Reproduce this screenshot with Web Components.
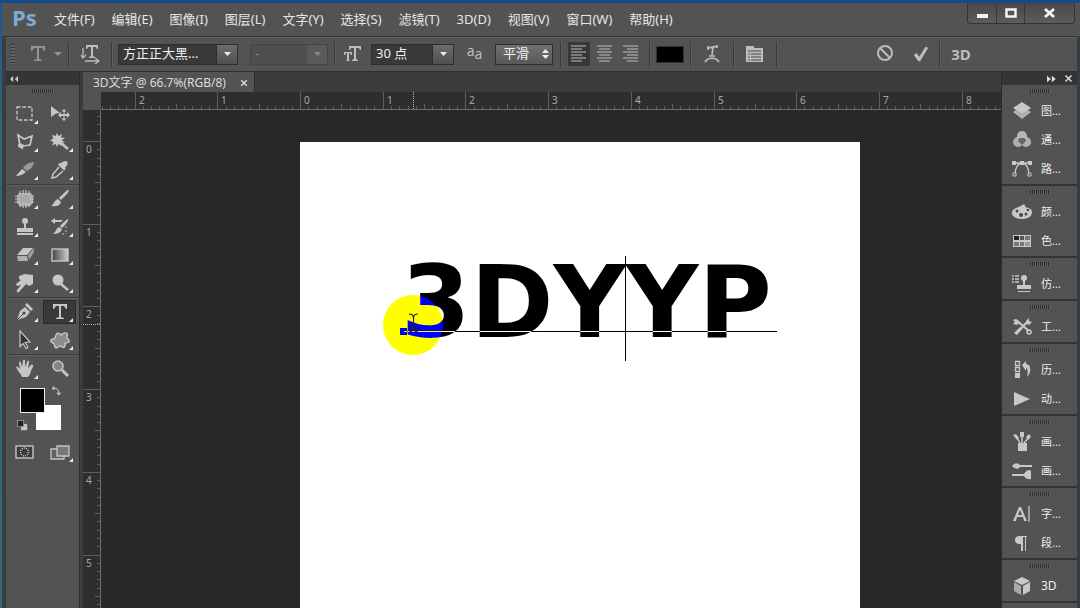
<!DOCTYPE html>
<html lang="zh-CN">
<head>
<meta charset="utf-8">
<title>3D文字</title>
<style>
html,body{margin:0;height:100%;background:#282828}
body{font:13px/20px "Noto Sans","Noto Sans CJK SC",sans-serif;color:#e2e2e2;overflow:hidden}
</style>
</head>
<body>
<ps-app></ps-app>
<script>
const ICONS={
marquee:'<rect x="2" y="3" width="15" height="13" fill="none" stroke="currentColor" stroke-width="1.3" stroke-dasharray="3.6 1.8"/>',
move:'<path d="M1 2l9 7-4 .5L1 13z"/><path d="M14 6l2.500 2.500h-2v2.500h2.500v-2l3 3-3 3v-2h-2.500v2.500h2L14 18l-2.500-2.500h2V13H11v2l-3-3 3-3v2h2.500V8.500h-2z" transform="translate(0 -1)"/>',
lasso:'<path d="M3 3l6 4 8-3-2 9-7 1-3-1zM8 14c-2-3-5-2-4 0s3 1 5-1M8 13l-1 4" fill="none" stroke="currentColor" stroke-width="1.700"/>',
wand:'<path d="M7 1l1.500 3L12 2l-1 3.500 4 .5-3 2 3 3-4-.5.5 3.500-3-2L7 15l-1.300-3L2 13.500 3.500 10 0 8.500l3.300-2L2 3l3.500 1z"/><path d="M11 11l7 6" stroke="currentColor" stroke-width="2.400"/>',
slice:'<path d="M1 16l6-7 4 3c-2 2-6 4-10 4z"/><path d="M8 8c4-5 6-5 11-6-1 5-3 7-7 9z" opacity=".6"/>',
dropper:'<path d="M11 3.500c2-3 5-3 6-2s1 4-2 6l1 1-2 2-6-6 2-2z"/><path d="M9 7l-6 7-1 4 4-1 7-6" fill="none" stroke="currentColor" stroke-width="1.500"/>',
heal:'<path d="M4 4h12l2 3v7l-3 3H5l-3-3V7z" opacity=".75"/><path d="M5 2v4M8 1v5M11 1v5M14 2v4M5 14v4M8 14v5M11 14v5M14 14v4M0 7h5M0 10h5M0 13h5M15 7h4M15 10h4M15 13h4" stroke="currentColor" stroke-width="1.200"/>',
brush:'<path d="M18 1c2 1 0 3-7 10L9 9c5-5 8-8 9-8z"/><path d="M8 10l3 3c-1 4-5 5-10 4 3-1 3-6 7-7z"/>',
stamp:'<circle cx="10" cy="4" r="3"/><path d="M9 6h2v5h7v4H2v-4h7zM2 16h16v2H2z"/>',
history:'<path d="M2 3h8V1l4 3-4 3V5H4z" transform="matrix(-1 0 0 1 15 0)"/><path d="M18 2c1 1-1 4-6 9l-2-2c4-4 7-7 8-7zM9 10l3 2c-1 4-5 5-9 5 3-2 3-6 6-7z"/><path d="M16 9v2m0 2v2m-2 2h-2" stroke="currentColor"/>',
eraser:'<path d="M8 3h10l-6 7H2z"/><path d="M2 11h10l1 5H3z" opacity=".8"/><path d="M13 10l6-7v4l-5 8z" opacity=".65"/>',
gradient:'<defs><linearGradient id="g"><stop stop-color="#444"/><stop offset="1" stop-color="#ccc"/></linearGradient></defs><rect x="2" y="4" width="16" height="12" fill="url(#g)" stroke="currentColor" stroke-width="1.400"/>',
smudge:'<path d="M4 3l6-2 8 1v9l-4 2-3-2-7 8c-1 1-3 0-2-2l4-5-4 1-1-2 5-4-2-1z"/>',
dodge:'<circle cx="8" cy="7" r="5.500"/><path d="M11 11l7 6" stroke="currentColor" stroke-width="2.500"/>',
pen:'<path d="M12 1l6 6-2 2-6-6z"/><path d="M10 5l5 5-4 5-9 3 3-9z"/><path d="M2 18l6-6" stroke="#4a4a4a"/><circle cx="9" cy="11" r="1.500" fill="#444"/>',
type:'<path d="M3 2h14v5h-1l-2-3h-3v11l3 1v1H6v-1l3-1V4H6L4 7H3z"/>',
arrow:'<path d="M5 1l10 11-5 .5 3 5-2 1-3-5-3 3z" fill="#333" stroke="currentColor" stroke-width="1.200"/>',
shape:'<path d="M6 5c1-3 4-2 5 0 3-3 8-3 6 1-1 2 1 3 2 4 1 3-3 3-4 3 1 4-2 6-4 3-2-1-4 4-6 1-1-2 0-3-2-4-3-1-3-3 0-4 3 0 2-2 3-4z" fill="#8b8b8b" stroke="currentColor" stroke-width="1.400"/>',
hand:'<path d="M1 8c1-1 2 0 4 2L4 4c0-2 2-2 2 0l1 4 1-6c0-2 2-2 2 0v6l2-5c1-2 3-1 2 0l-1 6 3-3c1-1 3 0 2 2-2 2-2 7-5 10H7c-1-3-3-4-6-10z"/>',
zoom:'<circle cx="8" cy="7" r="5" fill="#858585" stroke="currentColor" stroke-width="1.600"/><path d="M12 11l6 6" stroke="currentColor" stroke-width="3"/>',
mask:'<rect x="1" y="4" width="17" height="12" fill="#3c3c3c" stroke="currentColor" stroke-width="1.400"/><circle cx="9.500" cy="10" r="4" fill="none" stroke="currentColor" stroke-width="1.300" stroke-dasharray="1.200 1"/>',
screen:'<path d="M1 7h13v10H1z" fill="#606060" stroke="currentColor" stroke-width="1.300"/><path d="M7 4h12v10H7z" fill="#777" stroke="currentColor" stroke-width="1.300"/>',
swap:'<path d="M4 5c6 0 8 2 8 8" fill="none" stroke="currentColor" stroke-width="1.600"/><path d="M5 1v8L1 5zM8 12h8l-4 4z"/>',
defaults:'<rect x="7" y="7" width="9" height="9" fill="#c4c4c4"/><rect x="2" y="2" width="9" height="9" fill="#222" stroke="#aaa"/>',
tune:'<path d="M3 4v10M1 11l2 3 3-3M5 17h13M15 14l4 3-4 3" fill="none" stroke="currentColor" stroke-width="1.300"/><path d="M6 1h12v4h-1l-1-2h-3v9l2 1v1H9v-1l2-1V3H8L7 5H6z"/>',
size:'<path d="M6 2h12v4h-1l-1-2h-3v11l2 1v1H9v-1l2-1V4H8L7 6H6z"/><path d="M1 8h8v3H8l-1-2H6v7l1 1H3l1-1V9H3l-1 2H1z"/>',
left:'<path d="M2 2h15M2 5h11M2 8h15M2 11h11M2 14h15M2 17h11" stroke="currentColor" stroke-width="1.200"/>',
center:'<path d="M2 2h15M4 5h11M2 8h15M4 11h11M2 14h15M4 17h11" stroke="currentColor" stroke-width="1.200"/>',
right:'<path d="M2 2h15M6 5h11M2 8h15M6 11h11M2 14h15M6 17h11" stroke="currentColor" stroke-width="1.200"/>',
warp:'<path d="M6 4c3 0 5-1 9-2M6 2v4M15 1v3M11 3L10 11M7 12h6M3 18c3-5 11-5 14 0" fill="none" stroke="currentColor" stroke-width="1.700"/>',
panel:'<path d="M1 2h8v2h9v14H1z"/><path d="M3 7h13M6 10h10M6 13h10M6 16h10M3 10h2M3 13h2M3 16h2" stroke="#484848" stroke-width="1.200"/>',
cancel:'<circle cx="10" cy="9" r="7" fill="none" stroke="currentColor" stroke-width="2"/><path d="M5 4l10 10" stroke="currentColor" stroke-width="2"/>',
check:'<path d="M2 11l3-2 3 4 7-11 3 1L9 18H7z"/>',
layers:'<path d="M10 1l9 6-9 6-9-6z"/><path d="M1 11l3-2 6 4 6-4 3 2-9 7z" opacity=".8"/>',
channels:'<circle cx="10" cy="6" r="5" opacity=".85"/><circle cx="6" cy="12" r="5" opacity=".8"/><circle cx="14" cy="12" r="5" opacity=".8"/><path d="M7 8h6l1 3-4 4-4-4z" fill="#666"/>',
paths:'<path d="M3 16C3 9 6 4 10 4s7 5 7 12M3 4h14" fill="none" stroke="currentColor" stroke-width="1.300"/><path d="M0 2h4v4H0zM8 2h4v4H8zM16 2h4v4h-4z"/><path d="M1 14h3v3H1zM16 14h3v3h-3z" fill="#535353" stroke="currentColor"/>',
color:'<path d="M9 4c1-2 5-2 4 0s7 1 7 6-5 7-10 7S0 15 0 11s4-5 9-7z"/><g fill="#484848"><circle cx="5" cy="9" r="1.500"/><circle cx="9" cy="13" r="2"/><circle cx="14" cy="12" r="1.500"/><circle cx="16" cy="8" r="1.300"/></g>',
swatches:'<path d="M1 4h18v12H1z"/><path d="M2 5h5v4H2z" fill="#222"/><path d="M8 5h4v4H8z" fill="#555"/><path d="M13 5h5v4h-5z" fill="#777"/><path d="M2 11h5v4H2zM8 11h4v4H8z" fill="#777"/><path d="M13 11h5v4h-5z" fill="#999"/>',
clone:'<circle cx="12" cy="4" r="3"/><path d="M11 6h2v5h6v4H5v-4h6zM6 17h12v1H6z"/><path d="M0 2h2M3 2h4M0 5h2M3 5h4M0 8h2M3 8h4" stroke="currentColor" stroke-width="1.500"/>',
tools:'<path d="M4 3l13 11M16 4L4 17" stroke="currentColor" stroke-width="2.200"/><path d="M1 3l3-1 4 3-3 3-4-1 2-2z"/><circle cx="17" cy="15" r="2" fill="none" stroke="currentColor" stroke-width="1.600"/><path d="M2 16l6-6 2 2-5 6zM14 4l3-3v3l3 1-3 3-3-1z"/>',
hist:'<path d="M3.500 1.500h4v4h-4zM3.500 7.500h4v4h-4z" fill="none" stroke="currentColor" stroke-width="1.300"/><path d="M3 13h5v5H3zM10 5l4-4v3c5 0 6 8 1 13 1-5 1-8-1-9v3z"/>',
play:'<path d="M2 3l16 7-16 7z"/>',
presets:'<path d="M6 11h9v8H6z"/><path d="M8 11L4 4M10 11V2M12 11l5-6" stroke="currentColor" stroke-width="1.500"/><path d="M1 3l3-1 3 4-2 2zM8 0h4v5H8zM14 5l3-3 2 3-3 3z"/>',
brushes:'<path d="M0 5c3-4 6-3 8-1h12v2H8C6 9 3 8 0 5zM0 13h12c2-4 6-5 7-3v8c-3 1-6-1-7-3H0z"/>',
char:'<path d="M1 17L7 3h2l6 14h-3l-1-4H5l-1 4zM6 11h4L8 6z"/><path d="M17 2v16" stroke="currentColor" stroke-width="1.300"/>',
para:'<path d="M3 7c0-3 2-4 6-4h6v1h-1v14h-1V4h-2v14h-2v-7c-4 0-6-1-6-4z"/>',
cube:'<path d="M10 1l8 4-8 4-8-4z"/><path d="M2 6l7 4v9l-7-4z" opacity=".75"/><path d="M18 6l-7 4v9l7-4z"/>',
down:'<path d="M6 8h8l-4 4z"/>',
rewind:'<path d="M9 6v8L5 10zM15 6v8l-4-4z"/>',
forward:'<path d="M5 6v8l5-4zM11 6v8l5-4z"/>',
close:'<path d="M6 6l8 8M14 6l-8 8" stroke="currentColor" stroke-width="2"/>',
min:'<path d="M5 11h11v4H5z"/>',
max:'<path d="M5.500 6.500h9v7h-9z" fill="none" stroke="currentColor" stroke-width="2.500"/>',
wclose:'<path d="M5 6l9 8M14 6l-9 8" stroke="currentColor" stroke-width="2.800"/>'
};
const BTN='button{all:unset;box-sizing:border-box;display:flex;align-items:center;justify-content:center;cursor:default}';
function define(name,html,setup){
  customElements.define(name,class extends HTMLElement{
    connectedCallback(){
      if(this.shadowRoot)return;
      const root=this.attachShadow({mode:'open'});
      const t=document.createElement('template');
      t.innerHTML=typeof html==='function'?html(this):html;
      root.append(t.content.cloneNode(true));
      if(setup)setup(this,root);
    }
  });
}
define('ps-icon',el=>`<style>:host{display:block;flex:none;line-height:0}svg{display:block;width:${el.getAttribute('size')||20}px;height:${el.getAttribute('size')||20}px;fill:currentColor}</style><svg viewBox="0 0 20 20" aria-hidden="true">${ICONS[el.getAttribute('name')]}</svg>`);

define('ps-menubar',`<style>
:host{display:flex;align-items:flex-start;height:33px;background:#535353;box-sizing:border-box}
.logo{width:42px;height:30px;font:bold 22px/29px "Open Sans",sans-serif;color:#7fa9d6}
nav{display:flex;gap:17px;flex:1;line-height:32px}
a{color:#e6e6e6;text-decoration:none}
.win{display:flex;height:20px;margin-right:5px;border:1px solid #333;border-top:0;border-radius:0 0 4px 4px;background:linear-gradient(#484848,#5c5c5c)}
${BTN}
.win button{width:28px;color:#f4f4f4}.win button+button{border-left:1px solid #383838}.win button:last-child{width:50px}
</style><div class="logo">Ps</div><nav>${['文件(F)','编辑(E)','图像(I)','图层(L)','文字(Y)','选择(S)','滤镜(T)','3D(D)','视图(V)','窗口(W)','帮助(H)'].map(t=>`<a href="#">${t}</a>`).join('')}</nav>
<div class="win"><button aria-label="最小化"><ps-icon name="min"></ps-icon></button><button aria-label="最大化"><ps-icon name="max"></ps-icon></button><button aria-label="关闭"><ps-icon name="wclose"></ps-icon></button></div>`);

define('ps-select',el=>{const both=el.hasAttribute('spin'),off=el.hasAttribute('disabled');return `<style>
:host{display:block;position:relative;flex:none;height:21px;box-sizing:border-box;border:1px solid #2d2d2d;background:${both?'linear-gradient(#707070,#585858)':off?'#4e4e4e':'#393939'};${off?'border-color:#454545;':''}}
select{appearance:none;display:block;width:100%;height:19px;border:0;margin:0;padding:0 0 2px ${both?7:4}px;background:none;color:${off?'#888':'#f0f0f0'};font:inherit;line-height:17px;outline:0;opacity:1}
.btn{position:absolute;right:0;top:0;width:20px;height:19px;display:grid;place-items:center;pointer-events:none;color:${off?'#888':'#eee'};${both?'':off?'background:#5a5a5a':'background:linear-gradient(#6c6c6c,#505050);border-left:1px solid #2d2d2d'}}
.btn.spin{width:14px}
svg{display:block;fill:currentColor}
</style><select aria-label="${el.getAttribute('label')}" ${off?'disabled':''}><option>${el.getAttribute('value')}</option></select><span class="btn ${both?'spin':''}">${both?'<svg width="7" height="12"><path d="M0 5l3.500-4L7 5zM0 7h7l-3.500 4z"/></svg>':'<svg width="7" height="4"><path d="M0 0h7L3.500 4z"/></svg>'}</span>`});

define('ps-options',`<style>
:host{display:flex;align-items:center;height:36px;box-sizing:border-box;background:#535353;border-top:1px solid #303030;border-bottom:1px solid #303030;box-shadow:inset 0 1px #626262;color:#bdbdbd}
${BTN}
button,.cell{flex:none;height:24px;width:42px;display:flex;align-items:center;justify-content:center}
.grip{width:4px;height:20px;margin:0 3px 0 5px;background:repeating-linear-gradient(#333 0 1px,#666 1px 3px)}
.sep{flex:none;width:1px;height:25px;background:#3a3a3a;box-shadow:1px 0 #5e5e5e}
.w49{width:50px;color:#929292;padding-left:10px}.w36{width:36px}.w26{width:26px}.aa{width:41px;font-size:14px;line-height:16px}
.aa span:first-child{padding-bottom:6px}
.align{display:flex;margin:0 5px}
.on{background:#383838;width:22px;margin:0 2px}
.color{width:28px;height:17px;margin:0 6px;background:#000;border:1px solid #333}
.gap{width:90px}
.d3{font:bold 15px/20px "Open Sans",sans-serif}
</style>
<span class="grip"></span><button class="w49" aria-label="文字工具预设"><ps-icon name="type"></ps-icon><ps-icon name="down"></ps-icon></button><span class="sep"></span>
<button aria-label="切换文本取向"><ps-icon name="tune"></ps-icon></button><span class="sep"></span>
<ps-select style="width:120px;margin-left:6px" label="字体" value="方正正大黑..."></ps-select><ps-select style="width:78px;margin:0 6px 0 12px" label="字体样式" value="-" disabled></ps-select><span class="sep"></span>
<span class="cell w36"><ps-icon name="size"></ps-icon></span><ps-select style="width:83px" label="字体大小" value="30 点"></ps-select>
<span class="cell aa"><span>a</span><span>a</span></span><ps-select style="width:58px;margin-right:7px" label="消除锯齿" value="平滑" spin></ps-select><span class="sep"></span>
<div class="align"><button class="w26 on" aria-label="左对齐"><ps-icon name="left"></ps-icon></button><button class="w26" aria-label="居中对齐"><ps-icon name="center"></ps-icon></button><button class="w26" aria-label="右对齐"><ps-icon name="right"></ps-icon></button></div><span class="sep"></span>
<button class="color" aria-label="文本颜色"></button><span class="sep"></span>
<button aria-label="文字变形"><ps-icon name="warp"></ps-icon></button><span class="sep"></span>
<button aria-label="字符和段落面板"><ps-icon name="panel"></ps-icon></button><span class="sep"></span><span class="gap"></span>
<button class="w36" aria-label="取消"><ps-icon name="cancel"></ps-icon></button><button class="w36" aria-label="提交"><ps-icon name="check" size="18"></ps-icon></button><span class="sep"></span><button class="d3">3D</button>`);

const tool=([n,l,c=1,on=0])=>`<button aria-label="${l}" class="${c?'more':''} ${on?'on':''}"><ps-icon name="${n}"></ps-icon></button>`;
define('ps-toolbox',`<style>
:host{display:block;background:#535353;color:#c6c6c6;border-right:1px solid #2d2d2d}
${BTN}
header{display:flex;height:13px;background:#353535;align-items:center}
.grip{height:4px;width:22px;margin:4px auto 7px;background:repeating-linear-gradient(90deg,#2e2e2e 0 1px,#606060 1px 2px)}
.group{display:grid;grid-template-columns:35px 35px;grid-auto-rows:28px;padding-left:1px;border-bottom:1px solid #3c3c3c;box-shadow:0 1px #5e5e5e}
.group.last{border:0;box-shadow:none}
.group button{position:relative}
.more::after{content:"";position:absolute;right:4px;bottom:4px;border:2px solid transparent;border-right-color:#eee;border-bottom-color:#eee}
.on{background:#393939;border:1px solid #2a2a2a;margin:2px 1px}
.on.more::after{right:2px;bottom:1px}
.colors{position:relative;height:55px}
.colors button{position:absolute;box-sizing:border-box}
.fg{left:14px;top:5px;width:25px;height:25px;background:#000;border:1px solid #eee}
.bg{left:29px;top:21px;width:27px;height:27px;background:#fff;border:1px solid #555}
.swap{left:45px;top:2px}.def{left:10px;top:36px}
</style><header><ps-icon name="rewind" size="16"></ps-icon></header><div class="grip"></div>
<div class="group">${[['marquee','矩形选框'],['move','移动',0],['lasso','多边形套索'],['wand','魔棒'],['slice','切片'],['dropper','吸管']].map(tool).join('')}</div>
<div class="group">${[['heal','修补'],['brush','画笔'],['stamp','仿制图章'],['history','历史记录画笔'],['eraser','橡皮擦'],['gradient','渐变'],['smudge','涂抹'],['dodge','减淡']].map(tool).join('')}</div>
<div class="group">${[['pen','钢笔'],['type','文字',1,1],['arrow','路径选择'],['shape','自定形状']].map(tool).join('')}</div>
<div class="group last">${[['hand','抓手'],['zoom','缩放',0]].map(tool).join('')}</div>
<div class="colors"><button class="bg" aria-label="背景色"></button><button class="fg" aria-label="前景色"></button><button class="swap" aria-label="切换颜色"><ps-icon name="swap" size="13"></ps-icon></button><button class="def" aria-label="默认颜色"><ps-icon name="defaults" size="14"></ps-icon></button></div>
<div class="group last">${[['mask','快速蒙版',0],['screen','屏幕模式']].map(tool).join('')}</div>`);

/* Ruler: ten ticks per unit, redrawn for whatever length it is given. */
define('ps-ruler',el=>{
  const v=el.hasAttribute('vertical');
  return `<style>:host{display:block;overflow:hidden;min-width:0;min-height:0;background:#2e2e2e;box-sizing:border-box;position:relative;${v?'border-right':'border-bottom'}:1px solid #6b6b6b}
svg{position:absolute;inset:0;display:block;width:100%;height:100%}text{fill:#a8a8a8;font-size:10px}</style><svg></svg>`;
},(el,root)=>{
  const v=el.hasAttribute('vertical'),start=+el.getAttribute('origin'),mark=+el.getAttribute('mark'),step=82.7;
  const draw=()=>{
    const box=el.getBoundingClientRect(),size=v?box.height:box.width;
    let d='',txt='';
    for(let n=-30;;n++){
      const p=Math.round(start+n*step/10);
      if(p>=size)break;
      if(p<0)continue;
      const len=n%10===0?18:n%5===0?6:4;
      d+=v?`M${18-len} ${p}.5h${len}`:`M${p}.5 ${18-len}v${len}`;
      if(n%10===0&&p+12<size)txt+=v?`<text x="3" y="${p+12}">${Math.abs(n/10)}</text>`:`<text x="${p+4}" y="12">${Math.abs(n/10)}</text>`;
    }
    root.querySelector('svg').innerHTML=`<path d="${d}" stroke="#5e5e5e"/><path d="${v?`M0 ${mark}.5h18`:`M${mark}.5 0v18`}" stroke="#bbb" stroke-dasharray="1 1"/>${txt}`;
  };
  draw();
  new ResizeObserver(draw).observe(el);
});

define('ps-canvas',`<style>
:host{display:block;background:#282828;overflow:hidden;padding:32px 141px 0 199px;min-width:0}
.page{position:relative;isolation:isolate;background:#fff;height:100%}
.page>*{position:absolute}
.text{left:101px;top:103px;font:bold 100px/116px "DejaVu Sans",sans-serif;font-kerning:none;color:#000;white-space:nowrap}
.base{left:104px;top:189px;width:373px;height:1px;background:#fff;mix-blend-mode:difference}
.handle{left:100px;top:186px;width:7px;height:7px;background:#fff;mix-blend-mode:difference}
.caret{left:325px;top:114px;width:1px;height:105px;background:#000}
.spot{left:83px;top:153px;width:60px;height:60px;border-radius:50%;background:#00f;mix-blend-mode:difference}
.cursor{left:108px;top:171px;width:11px;height:20px}
</style><div class="page"><div class="text">3DYYP</div><div class="base"></div><div class="handle"></div><div class="caret"></div><div class="spot"></div>
<svg class="cursor" viewBox="0 0 11 20" fill="none" stroke="#223" stroke-width="1.200"><path d="M1 1c3 0 4.500 1 4.500 4v9c0 3-1.500 5-4.500 5M10 1c-3 0-4.500 1-4.500 4v9c0 3 1.500 5 4.500 5M3 13h5"/><path d="M1 9v9M3 10v8M8 13v5M10 14v4" stroke-dasharray="1 1"/></svg></div>`);

define('ps-document',`<style>
:host{display:grid;grid-template:20px 18px minmax(0,1fr)/18px minmax(0,1fr);background:#3c3c3c;min-width:0;min-height:0;padding-left:3px}
${BTN}
.tabs{grid-column:1/3;display:flex}
.tab{display:flex;align-items:center;height:20px;line-height:20px;background:#535353;padding:2px 3px 0 10px;box-sizing:border-box;font-size:12px;border-right:1px solid #2c2c2c;color:#dcdcdc;gap:11px}
.corner{background:#535353}
</style><div class="tabs"><div class="tab"><span>3D文字 @ 66.7%(RGB/8)</span><button aria-label="关闭文档"><ps-icon name="close" size="14"></ps-icon></button></div></div>
<span class="corner"></span><ps-ruler origin="199" mark="312"></ps-ruler><ps-ruler vertical origin="31" mark="214"></ps-ruler><ps-canvas></ps-canvas>`);

define('ps-panel-group',el=>`<style>
:host{display:block;padding-bottom:1px;border-bottom:2px solid #343434;background:#535353}
.grip{height:4px;width:20px;margin:4px auto 3px;background:repeating-linear-gradient(90deg,#2e2e2e 0 1px,#606060 1px 2px)}
${BTN}
button{display:flex;width:100%;height:29px;justify-content:flex-start;padding-left:10px;gap:9px;color:#c8c8c8}
button span{font-size:11px;color:#eee}
.big span{font-size:12px}
</style><div class="grip"></div>${el.getAttribute('items').split(',').map(x=>{const [n,l]=x.split(':');return `<button class="${l==='3D'?'big':''}"><ps-icon name="${n}"></ps-icon><span>${l}</span></button>`}).join('')}`);
define('ps-dock',`<style>
:host{display:block;background:#535353;border-left:1px solid #2c2c2c;overflow:hidden}
${BTN}
header{display:flex;height:13px;background:#353535;align-items:center;justify-content:flex-end;color:#ddd;gap:2px;padding-right:1px}
</style><header><button aria-label="展开面板"><ps-icon name="forward" size="16"></ps-icon></button><button aria-label="关闭面板"><ps-icon name="close" size="15"></ps-icon></button></header>
${['layers:图...,channels:通...,paths:路...','color:颜...,swatches:色...','clone:仿...','tools:工...','hist:历...,play:动...','presets:画...,brushes:画...','char:字...,para:段...','cube:3D'].map(i=>`<ps-panel-group items="${i}"></ps-panel-group>`).join('')}`);

define('ps-app',`<style>
:host{display:flex;flex-direction:column;height:100vh;box-sizing:border-box;border-top:3px solid #144a8c;padding:0 3px 0 6px;background:linear-gradient(#1c5597,#2f6670 20%,#356b70) 0 0/2px 100% no-repeat,#383d40}
ps-menubar{margin:0 -3px 0 -4px;padding-left:10px}
main{display:grid;grid-template-columns:74px minmax(0,1fr) 76px;flex:1;min-height:0}
</style><ps-menubar></ps-menubar><ps-options></ps-options><main><ps-toolbox></ps-toolbox><ps-document></ps-document><ps-dock></ps-dock></main>`);
</script>
</body>
</html>
